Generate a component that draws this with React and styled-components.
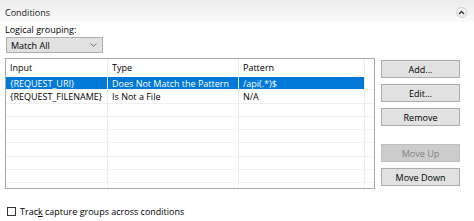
import React, { useState } from 'react'
import styled, { createGlobalStyle } from 'styled-components'

const Global = createGlobalStyle`
  html, body {
    margin: 0;
    padding: 0;
    background: #ffffff;
  }
  body {
    font-family: "Open Sans", "Noto Sans", "Liberation Sans", sans-serif;
    font-size: 9px;
    color: #000000;
  }
`

const Panel = styled.div`
  width: 474px;
  height: 221px;
  overflow: hidden;
  background: #ffffff;
`

const Header = styled.div`
  height: 22px;
  display: flex;
  align-items: center;
  justify-content: space-between;
  padding: 3px 7px 0 5px;
  box-sizing: border-box;
  background: linear-gradient(#ebebeb, #fbfbfb);
`

const Title = styled.span`
  font-size: 9px;
  color: #1a1a1a;
`

const Collapse = styled.button`
  width: 11px;
  height: 11px;
  padding: 0;
  border-radius: 50%;
  border: 1px solid #cfcfcf;
  background: linear-gradient(#ffffff, #ececec);
  display: flex;
  align-items: center;
  justify-content: center;
`

const Body = styled.div`
  padding: 0 5px;
`

const Label = styled.div`
  height: 14px;
  line-height: 14px;
  margin-top: 1px;
`

const Select = styled.div`
  width: 97px;
  height: 16px;
  margin: 0 0 0 1px;
  border: 1px solid #adadad;
  background: #e1e1e1;
  display: flex;
  align-items: center;
  justify-content: space-between;
  padding: 0 5px 0 4px;
  box-sizing: border-box;
`

const Main = styled.div`
  display: flex;
  gap: 6px;
  margin-top: 5px;
`

const List = styled.div`
  width: 370px;
  height: 131px;
  box-sizing: border-box;
  border: 1px solid #a9a9a9;
  overflow: hidden;
`

const Row = styled.div`
  display: flex;
  height: ${p => (p.$head ? 18 : 13.3)}px;
  box-sizing: border-box;
  border-bottom: 1px solid ${p => (p.$head ? 'transparent' : '#f0f0f0')};
`

const Cell = styled.div`
  width: ${p => p.$w}px;
  flex: ${p => (p.$w ? 'none' : '1')};
  box-sizing: border-box;
  padding-left: 4px;
  display: flex;
  align-items: center;
  border-right: 1px solid #ececec;
  white-space: nowrap;
  background: ${p => (p.$sel ? '#0078d7' : 'transparent')};
  color: ${p => (p.$sel ? '#ffffff' : '#000000')};
  &:last-child {
    border-right: none;
  }
`

const Buttons = styled.div`
  display: flex;
  flex-direction: column;
  padding-top: 2px;
`

const Button = styled.button`
  width: 79px;
  height: 18px;
  padding: 0;
  margin-bottom: ${p => p.$gap ?? 6}px;
  font: inherit;
  border: 1px solid ${p => (p.disabled ? '#bfbfbf' : '#adadad')};
  background: ${p => (p.disabled ? '#cccccc' : '#e1e1e1')};
  color: ${p => (p.disabled ? '#838383' : '#000000')};
  &:last-child {
    margin-bottom: 0;
  }
`

const Check = styled.label`
  display: flex;
  align-items: center;
  gap: 4px;
  margin: 17px 0 0 2px;
  height: 11px;
`

const Box = styled.span`
  width: 9px;
  height: 9px;
  box-sizing: border-box;
  border: 1px solid #333333;
  background: #ffffff;
`

const cols = [102, 131, 126]

const rows = [
  ['{REQUEST_URI}', 'Does Not Match the Pattern', '/api(.*)$'],
  ['{REQUEST_FILENAME}', 'Is Not a File', 'N/A'],
]

export default function App() {
  const [selected, setSelected] = useState(0)
  const [track, setTrack] = useState(false)
  const empty = Array.from({ length: 7 }, () => ['', '', ''])

  return (
    <Panel>
      <Global />
      <Header>
        <Title>Conditions</Title>
        <Collapse aria-label="collapse">
          <svg width="7" height="5" viewBox="0 0 7 5">
            <path d="M1 4 L3.5 1.5 L6 4" fill="none" stroke="#333" strokeWidth="1.3" />
          </svg>
        </Collapse>
      </Header>
      <Body>
        <Label>Logical grouping:</Label>
        <Select>
          <span>Match All</span>
          <svg width="7" height="4" viewBox="0 0 7 4">
            <path d="M0.5 0.5 L3.5 3.3 L6.5 0.5" fill="none" stroke="#666" strokeWidth="0.9" />
          </svg>
        </Select>
        <Main>
          <List>
            <Row $head>
              <Cell $w={cols[0]}>Input</Cell>
              <Cell $w={cols[1]}>Type</Cell>
              <Cell $w={cols[2]}>Pattern</Cell>
              <Cell />
            </Row>
            {rows.map((r, i) => (
              <Row key={i} onClick={() => setSelected(i)}>
                {r.map((c, j) => (
                  <Cell key={j} $w={cols[j]} $sel={selected === i}>{c}</Cell>
                ))}
                <Cell />
              </Row>
            ))}
            {empty.map((r, i) => (
              <Row key={'e' + i}>
                {r.map((c, j) => (
                  <Cell key={j} $w={cols[j]} />
                ))}
                <Cell />
              </Row>
            ))}
          </List>
          <Buttons>
            <Button>Add...</Button>
            <Button>Edit...</Button>
            <Button $gap={18}>Remove</Button>
            <Button disabled>Move Up</Button>
            <Button>Move Down</Button>
          </Buttons>
        </Main>
        <Check onClick={() => setTrack(!track)}>
          <Box />
          <span>Trac<u>k</u> capture groups across conditions</span>
        </Check>
      </Body>
    </Panel>
  )
}
